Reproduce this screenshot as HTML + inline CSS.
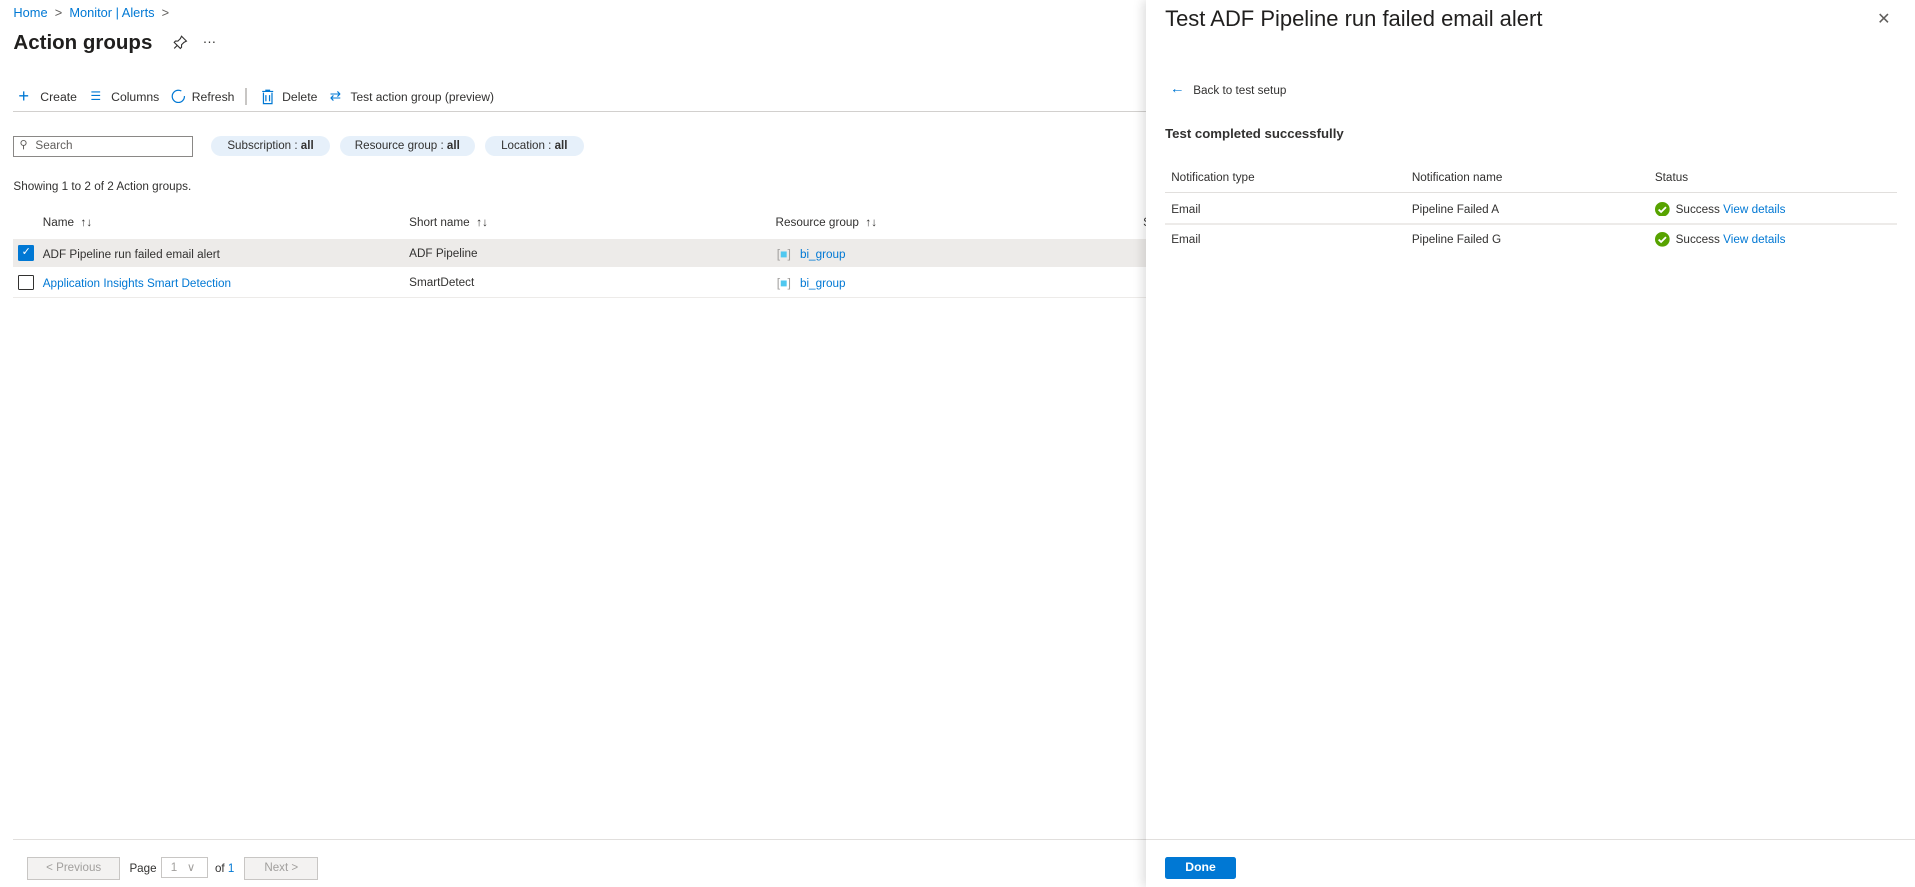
<!DOCTYPE html>
<html><head><meta charset="utf-8"><style>
html,body{margin:0;padding:0;background:#fff;overflow:hidden}
body{width:1915px;height:887px}
#r{zoom:1.22130;width:1568px;height:726px;position:relative;font-family:"Liberation Sans",sans-serif;font-size:9.6px;color:#323130}
.a{position:absolute;white-space:nowrap}
.b{color:#0078d4}
.pill{position:absolute;top:111px;height:17px;border-radius:9px;background:#e6f0fa;line-height:17px;text-align:center;font-size:9.5px}
.btn{position:absolute;height:17px;border:1px solid #c8c6c4;background:#f3f2f1;color:#a19f9d;line-height:17px;text-align:center;font-size:9.5px}
svg{position:absolute}
</style></head><body><div id="r">
<div class="a b" style="left:11px;top:4px;font-size:10.5px">Home &nbsp;<span style="color:#605e5c">&gt;</span>&nbsp; Monitor | Alerts &nbsp;<span style="color:#605e5c">&gt;</span></div>
<div class="a" style="left:11px;top:25px;font-size:16.8px;font-weight:600;color:#201f1e">Action groups</div>
<svg style="left:142px;top:29px" width="12" height="12"><path d="M7 1l4 4-2 1-2 2 0 2-1 1-5-5 1-1h2l2-2zM3.5 8.5L1 11" fill="none" stroke="#323130" stroke-width="0.9"/></svg>
<div class="a" style="left:166px;top:28px;font-size:11px">···</div>
<div class="a b" style="left:15px;top:70px;font-size:15px">+</div>
<div class="a" style="left:33px;top:74px;font-size:10px">Create</div>
<div class="a b" style="left:74px;top:73px;font-size:10px">☰</div>
<div class="a" style="left:91px;top:74px;font-size:10px">Columns</div>
<svg style="left:140px;top:73px" width="12" height="12"><circle cx="6" cy="6" r="5" fill="none" stroke="#0078d4" stroke-width="1" stroke-dasharray="26 5"/></svg>
<div class="a" style="left:157px;top:74px;font-size:10px">Refresh</div>
<div class="a" style="left:201px;top:72px;width:1px;height:14px;background:#c8c6c4"></div>
<svg style="left:214px;top:73px" width="11" height="13"><path d="M1 2h9M4 2V1h3v1M2 3v9h7V3M4 5v5M7 5v5" fill="none" stroke="#0078d4"/></svg>
<div class="a" style="left:231px;top:74px;font-size:10px">Delete</div>
<div class="a b" style="left:270px;top:72px;font-size:11px">⇄</div>
<div class="a" style="left:287px;top:74px;font-size:9.8px">Test action group (preview)</div>
<div class="a" style="left:11px;top:91px;width:927px;height:1px;background:#d2d0ce"></div>
<div class="a" style="left:11px;top:111px;width:145px;height:16px;border:1px solid #8a8886"></div>
<div class="a" style="left:16px;top:113px;font-size:9px;color:#605e5c">⚲</div>
<div class="a" style="left:29px;top:114px;color:#605e5c">Search</div>
<div class="pill" style="left:173px;width:97px">Subscription : <b>all</b></div>
<div class="pill" style="left:278px;width:111px">Resource group : <b>all</b></div>
<div class="pill" style="left:397px;width:81px">Location : <b>all</b></div>
<div class="a" style="left:11px;top:147px">Showing 1 to 2 of 2 Action groups.</div>
<div class="a" style="left:35px;top:177px">Name &nbsp;↑↓</div>
<div class="a" style="left:335px;top:177px">Short name &nbsp;↑↓</div>
<div class="a" style="left:635px;top:177px">Resource group &nbsp;↑↓</div>
<div class="a" style="left:936px;top:177px">S</div>
<div class="a" style="left:11px;top:196px;width:927px;height:23px;background:#edebe9"></div>
<div class="a" style="left:15px;top:201px;width:13px;height:13px;background:#0078d4;border-radius:1px;color:#fff;font-size:9px;line-height:13px;text-align:center">✓</div>
<div class="a" style="left:35px;top:203px">ADF Pipeline run failed email alert</div>
<div class="a" style="left:335px;top:202px">ADF Pipeline</div>
<div class="a" style="left:15px;top:225px;width:11px;height:11px;border:1px solid #323130;border-radius:1px"></div>
<div class="a b" style="left:35px;top:227px">Application Insights Smart Detection</div>
<div class="a" style="left:335px;top:226px">SmartDetect</div>
<div class="a" style="left:11px;top:243px;width:927px;height:1px;background:#edebe9"></div>
<div class="a" style="left:636px;top:202px;font-size:10px;color:#a19f9d">[<span style="color:#50c8f0">■</span>]</div>
<div class="a b" style="left:655px;top:203px">bi_group</div>
<div class="a" style="left:636px;top:226px;font-size:10px;color:#a19f9d">[<span style="color:#50c8f0">■</span>]</div>
<div class="a b" style="left:655px;top:227px">bi_group</div>
<div class="a" style="left:11px;top:687px;width:927px;height:1px;background:#e1dfdd"></div>
<div class="btn" style="left:22px;top:702px;width:75px">&lt; Previous</div>
<div class="a" style="left:106px;top:706px;font-size:9.5px">Page</div>
<div class="btn" style="left:132px;top:702px;width:38px;background:#fff;text-align:left;padding-left:7px;box-sizing:border-box">1 &nbsp;&nbsp;∨</div>
<div class="a" style="left:176px;top:706px;font-size:9.5px">of <span class="b">1</span></div>
<div class="btn" style="left:200px;top:702px;width:59px">Next &gt;</div>
<div class="a" style="left:938px;top:0;width:630px;height:726px;background:#fff;box-shadow:-3px 0 8px rgba(0,0,0,0.13)"></div>
<div class="a" style="left:954px;top:5px;font-size:18px;color:#201f1e">Test ADF Pipeline run failed email alert</div>
<div class="a" style="left:1537px;top:7px;font-size:13px;color:#605e5c">✕</div>
<div class="a b" style="left:958px;top:66px;font-size:12px">←</div>
<div class="a" style="left:977px;top:69px">Back to test setup</div>
<div class="a" style="left:954px;top:103px;font-size:10.8px;font-weight:600">Test completed successfully</div>
<div class="a" style="left:959px;top:140px">Notification type</div>
<div class="a" style="left:1156px;top:140px">Notification name</div>
<div class="a" style="left:1355px;top:140px">Status</div>
<div class="a" style="left:954px;top:157px;width:599px;height:1px;background:#e1dfdd"></div>
<div class="a" style="left:959px;top:166px">Email</div>
<div class="a" style="left:1156px;top:166px">Pipeline Failed A</div>
<div class="a" style="left:954px;top:183px;width:599px;height:1px;background:#edebe9"></div>
<div class="a" style="left:959px;top:191px">Email</div>
<div class="a" style="left:1156px;top:191px">Pipeline Failed G</div>
<svg style="left:1355px;top:165px" width="12" height="12"><circle cx="6" cy="6" r="6" fill="#57a300"/><path d="M3 6.2l2 2 4-4" fill="none" stroke="#fff" stroke-width="1.5"/></svg>
<div class="a" style="left:1372px;top:166px">Success <span class="b">View details</span></div>
<svg style="left:1355px;top:190px" width="12" height="12"><circle cx="6" cy="6" r="6" fill="#57a300"/><path d="M3 6.2l2 2 4-4" fill="none" stroke="#fff" stroke-width="1.5"/></svg>
<div class="a" style="left:1372px;top:191px">Success <span class="b">View details</span></div>
<div class="a" style="left:938px;top:687px;width:630px;height:1px;background:#e1dfdd"></div>
<div class="a" style="left:954px;top:702px;width:58px;height:18px;background:#0078d4;border-radius:2px;color:#fff;font-weight:600;font-size:10px;line-height:18px;text-align:center">Done</div>
</div></body></html>
